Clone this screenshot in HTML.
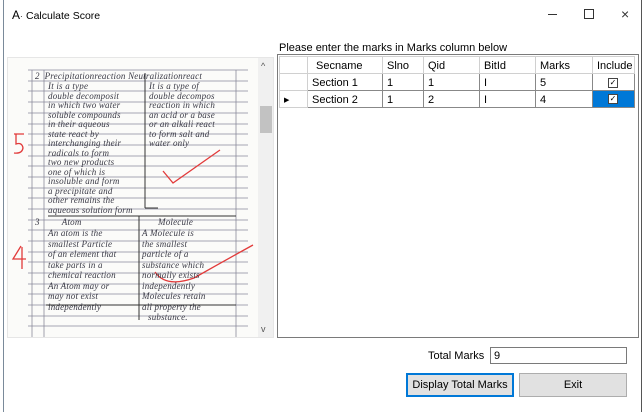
<!DOCTYPE html>
<html><head><style>
*{margin:0;padding:0;box-sizing:border-box}
body{width:642px;height:412px;background:#fff;font-family:"Liberation Sans",sans-serif;font-size:11px;color:#000;position:relative;overflow:hidden}
.a{position:absolute}
.c{position:absolute;border-right:1px solid #d0d0d0;border-bottom:1px solid #d0d0d0;padding:3px 0 0 4px;height:17px}
.hw{position:absolute;font-family:"Liberation Serif",serif;font-style:italic;font-size:9px;color:#3a3a46;letter-spacing:0.2px;white-space:nowrap}
</style></head><body>
<div class="a" style="left:3px;top:0;width:1px;height:412px;background:#7a8a9a"></div>
<div class="a" style="left:641px;top:0;width:1px;height:412px;background:#555"></div>
<div class="a" style="left:12px;top:8px;font-size:12px">A<span style="font-size:8px">·</span></div>
<div class="a" style="left:26px;top:10px;font-size:10.5px">Calculate Score</div>
<div class="a" style="left:548px;top:14px;width:9px;height:1px;background:#333"></div>
<div class="a" style="left:584px;top:9px;width:10px;height:10px;border:1px solid #333"></div>
<div class="a" style="left:621px;top:6px;font-size:14px;color:#333">×</div>

<div class="a" style="left:279px;top:42px;font-size:11px">Please enter the marks in Marks column below</div>

<div class="a" style="left:7px;top:57px;width:267px;height:281px;border:1px solid #e6e6e6;background:#fbfbf9;overflow:hidden">
<svg width="267" height="281" style="position:absolute;left:0;top:0">
<g stroke="#8a8a9a" stroke-width="0.8">
<line x1="20" y1="12" x2="240" y2="12"/>
<line x1="20" y1="23" x2="240" y2="23"/><line x1="20" y1="33" x2="240" y2="33"/><line x1="20" y1="44" x2="240" y2="44"/><line x1="20" y1="55" x2="240" y2="55"/><line x1="20" y1="66" x2="240" y2="66"/><line x1="20" y1="76" x2="240" y2="76"/><line x1="20" y1="87" x2="240" y2="87"/><line x1="20" y1="98" x2="240" y2="98"/><line x1="20" y1="108" x2="240" y2="108"/><line x1="20" y1="119" x2="240" y2="119"/><line x1="20" y1="130" x2="240" y2="130"/><line x1="20" y1="140" x2="240" y2="140"/><line x1="20" y1="151" x2="240" y2="151"/><line x1="20" y1="162" x2="240" y2="162"/><line x1="20" y1="172" x2="240" y2="172"/><line x1="20" y1="183" x2="240" y2="183"/><line x1="20" y1="194" x2="240" y2="194"/><line x1="20" y1="204" x2="240" y2="204"/><line x1="20" y1="215" x2="240" y2="215"/><line x1="20" y1="226" x2="240" y2="226"/><line x1="20" y1="236" x2="240" y2="236"/><line x1="20" y1="247" x2="240" y2="247"/><line x1="20" y1="258" x2="240" y2="258"/><line x1="20" y1="268" x2="240" y2="268"/>
<line x1="24" y1="12" x2="24" y2="281"/><line x1="36" y1="12" x2="36" y2="281"/><line x1="228" y1="12" x2="228" y2="281"/>
</g>
<g stroke="#333" stroke-width="1" fill="none">
<line x1="137" y1="15" x2="137" y2="150"/><line x1="137" y1="150" x2="150" y2="150"/><line x1="40" y1="158" x2="228" y2="158"/>
<line x1="131" y1="158" x2="131" y2="262"/><line x1="38" y1="247" x2="228" y2="247"/>
</g>
<g stroke="#e23a3a" stroke-width="1.3" fill="none">
<path d="M6 76 L16 76 M8 76 L8 86 Q14 84 15 90 Q14 96 6 95"/>
<path d="M155 113 L165 125 L212 92"/>
<path d="M13 188 L5 201 L18 201 M14 189 L14 211"/>
<path d="M147 214 Q158 230 186 220 Q216 203 245 187"/>
</g>
</svg>
<div class="hw" style="left:27px;top:13px">2 &nbsp;Precipitationreaction Neutralizationreact</div>
<div class="hw" style="left:40px;top:23px">It is a type</div><div class="hw" style="left:141px;top:23px">It is a type of</div>
<div class="hw" style="left:40px;top:32.5px">double decomposit</div><div class="hw" style="left:141px;top:32.5px">double decompos</div>
<div class="hw" style="left:40px;top:42px">in which two water</div><div class="hw" style="left:141px;top:42px">reaction in which</div>
<div class="hw" style="left:40px;top:51.5px">soluble compounds</div><div class="hw" style="left:141px;top:51.5px">an acid or a base</div>
<div class="hw" style="left:40px;top:61px">in their aqueous</div><div class="hw" style="left:141px;top:61px">or an alkali react</div>
<div class="hw" style="left:40px;top:70.5px">state react by</div><div class="hw" style="left:141px;top:70.5px">to form salt and</div>
<div class="hw" style="left:40px;top:80px">interchanging their</div><div class="hw" style="left:141px;top:80px">water only</div>
<div class="hw" style="left:40px;top:89.5px">radicals to form</div>
<div class="hw" style="left:40px;top:99px">two new products</div>
<div class="hw" style="left:40px;top:108.5px">one of which is</div>
<div class="hw" style="left:40px;top:118px">insoluble and form</div>
<div class="hw" style="left:40px;top:127.5px">a precipitate and</div>
<div class="hw" style="left:40px;top:137px">other remains the</div>
<div class="hw" style="left:40px;top:146.5px">aqueous solution form</div>
<div class="hw" style="left:27px;top:159px">3 &nbsp;&nbsp;&nbsp;&nbsp;&nbsp;&nbsp;&nbsp;&nbsp;Atom</div><div class="hw" style="left:150px;top:159px">Molecule</div>
<div class="hw" style="left:40px;top:170px">An atom is the</div><div class="hw" style="left:134px;top:170px">A Molecule is</div>
<div class="hw" style="left:40px;top:180.5px">smallest Particle</div><div class="hw" style="left:134px;top:180.5px">the smallest</div>
<div class="hw" style="left:40px;top:191px">of an element that</div><div class="hw" style="left:134px;top:191px">particle of a</div>
<div class="hw" style="left:40px;top:201.5px">take parts in a</div><div class="hw" style="left:134px;top:201.5px">substance which</div>
<div class="hw" style="left:40px;top:212px">chemical reaction</div><div class="hw" style="left:134px;top:212px">normally exists</div>
<div class="hw" style="left:40px;top:222.5px">An Atom may or</div><div class="hw" style="left:134px;top:222.5px">independently</div>
<div class="hw" style="left:40px;top:233px">may not exist</div><div class="hw" style="left:134px;top:233px">Molecules retain</div>
<div class="hw" style="left:40px;top:243.5px">independently</div><div class="hw" style="left:134px;top:243.5px">all property the</div>
<div class="hw" style="left:140px;top:254px">substance.</div>
<div class="a" style="left:250px;top:0;width:16px;height:281px;background:#f0f0f0"></div>
<div class="a" style="left:252px;top:48px;width:12px;height:27px;background:#c2c2c2"></div>
<div class="a" style="left:253px;top:3px;font-size:9px;color:#555">^</div>
<div class="a" style="left:253px;top:266px;font-size:9px;color:#555">v</div>
</div>

<div class="a" style="left:277px;top:54px;width:362px;height:284px;border:1px solid #7a7a7a;background:#fff"></div>
<div class="c" style="left:279px;top:56px;width:29px;border-left:1px solid #d0d0d0;border-top:1px solid #d0d0d0;height:18px"></div>
<div class="c" style="left:308px;top:56px;width:75px;border-top:1px solid #d0d0d0;height:18px;padding-left:8px">Secname</div>
<div class="c" style="left:383px;top:56px;width:41px;border-top:1px solid #d0d0d0;height:18px">Slno</div>
<div class="c" style="left:424px;top:56px;width:56px;border-top:1px solid #d0d0d0;height:18px">Qid</div>
<div class="c" style="left:480px;top:56px;width:56px;border-top:1px solid #d0d0d0;height:18px">BitId</div>
<div class="c" style="left:536px;top:56px;width:57px;border-top:1px solid #d0d0d0;height:18px">Marks</div>
<div class="c" style="left:593px;top:56px;width:42px;border-top:1px solid #d0d0d0;height:18px">Include</div>

<div class="c" style="left:279px;top:74px;width:29px;border-left:1px solid #d0d0d0"></div>
<div class="c" style="left:308px;top:74px;width:75px;border-color:#888">Section 1</div>
<div class="c" style="left:383px;top:74px;width:41px;border-color:#888">1</div>
<div class="c" style="left:424px;top:74px;width:56px;border-color:#888">1</div>
<div class="c" style="left:480px;top:74px;width:56px;border-color:#888">I</div>
<div class="c" style="left:536px;top:74px;width:57px;border-color:#888">5</div>
<div class="c" style="left:593px;top:74px;width:42px;border-color:#888"></div>
<div class="a" style="left:608px;top:78px;width:10px;height:10px;border:1px solid #444;font-size:8px;line-height:8px;text-align:center">✓</div>

<div class="c" style="left:279px;top:91px;width:29px;border-left:1px solid #d0d0d0;font-size:7px;padding:5px 0 0 4px">▶</div>
<div class="c" style="left:308px;top:91px;width:75px;border-color:#888">Section 2</div>
<div class="c" style="left:383px;top:91px;width:41px;border-color:#888">1</div>
<div class="c" style="left:424px;top:91px;width:56px;border-color:#888">2</div>
<div class="c" style="left:480px;top:91px;width:56px;border-color:#888">I</div>
<div class="c" style="left:536px;top:91px;width:57px;border-color:#888">4</div>
<div class="c" style="left:593px;top:91px;width:42px;background:#0078d7;border-color:#888"></div>
<div class="a" style="left:608px;top:94px;width:10px;height:10px;border:1px solid #444;background:#fff;font-size:8px;line-height:8px;text-align:center">✓</div>

<div class="a" style="left:428px;top:350px">Total Marks</div>
<div class="a" style="left:490px;top:347px;width:137px;height:17px;border:1px solid #7a7a7a;padding:2px 3px">9</div>
<div class="a" style="left:406px;top:373px;width:108px;height:24px;border:2px solid #0078d7;background:#e1e1e1;text-align:center;line-height:20px">Display Total Marks</div>
<div class="a" style="left:519px;top:373px;width:108px;height:24px;border:1px solid #adadad;background:#e1e1e1;text-align:center;line-height:22px">Exit</div>
</body></html>
